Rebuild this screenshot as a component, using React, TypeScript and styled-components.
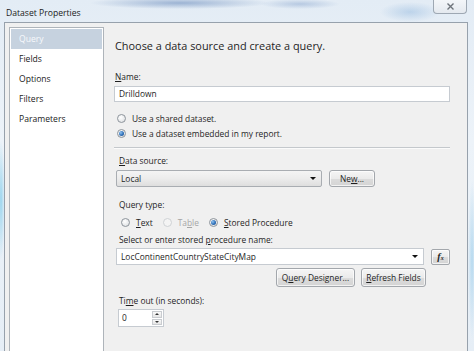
import React from "react";
import styled, { createGlobalStyle, css } from "styled-components";

const GlobalStyle = createGlobalStyle`
  html, body { margin: 0; padding: 0; }
  body {
    width: 474px;
    height: 351px;
    overflow: hidden;
    font-family: "Open Sans", "Noto Sans", "DejaVu Sans", sans-serif;
    color: #1e1e1e;
  }
`;

const Window = styled.div`
  width: 474px;
  height: 351px;
  display: flex;
  flex-direction: column;
  overflow: hidden;
  background:
    radial-gradient(ellipse 90px 6px at 180px 3px, rgba(70, 110, 170, 0.45), transparent),
    radial-gradient(ellipse 40px 5px at 300px 4px, rgba(80, 120, 180, 0.3), transparent),
    radial-gradient(ellipse 30px 10px at 410px 12px, rgba(140, 180, 220, 0.45), transparent),
    radial-gradient(ellipse 4px 60px at 1px 200px, rgba(90, 190, 230, 0.55), transparent),
    radial-gradient(ellipse 4px 80px at 472px 260px, rgba(120, 190, 230, 0.45), transparent),
    linear-gradient(180deg, #e3ecf5 0%, #edf3f9 40%, #e6eef6 100%);
`;

const TitleBar = styled.div`
  height: 22px;
  flex: none;
  display: flex;
  align-items: flex-start;
  padding-left: 6px;
`;

const Title = styled.span`
  margin-top: 7px;
  font-size: 8.6px;
  line-height: 12px;
  color: #1a1a1a;
`;

const CloseButton = styled.div`
  margin-left: auto;
  margin-right: 7px;
  width: 34px;
  height: 14px;
  box-sizing: border-box;
  border: 1px solid #9ea8b3;
  border-top: none;
  border-radius: 0 0 4px 4px;
  background: linear-gradient(180deg, #f3f6f9 0%, #e4e9ef 100%);
  display: flex;
  align-items: center;
  justify-content: center;
`;

const Client = styled.div`
  flex: 1;
  display: flex;
  margin: 0 6px 0 4px;
  border: 1px solid #97a1ac;
  border-bottom: none;
  background: #f0f0f0;
`;

const Nav = styled.div`
  width: 96px;
  box-sizing: border-box;
  margin: 4px 0 0 4px;
  padding: 1px;
  background: #ffffff;
  border: 1px solid #aeb4ba;
  border-bottom: none;
  display: flex;
  flex-direction: column;
`;

const NavItem = styled.div<{ $selected?: boolean }>`
  height: 20px;
  box-sizing: border-box;
  padding: 1px 0 0 8px;
  line-height: 19px;
  font-size: 8.6px;
  color: #222;
  ${(p) =>
    p.$selected &&
    css`
      background: #c6d2df;
      color: #f7f9fc;
    `}
`;

const Content = styled.div`
  flex: 1;
  display: flex;
  flex-direction: column;
  padding: 0 17px 0 10px;
`;

const Heading = styled.div`
  margin-top: 15px;
  padding-left: 1px;
  height: 16px;
  line-height: 16px;
  font-size: 10.9px;
  color: #1e1e1e;
`;

const Label = styled.div<{ $mt: number; $indent?: number }>`
  margin-top: ${(p) => p.$mt}px;
  padding-left: ${(p) => p.$indent ?? 1}px;
  height: 12px;
  line-height: 12px;
  font-size: 8.4px;
  color: #1e1e1e;
`;

const U = styled.span`
  text-decoration: underline;
  text-underline-offset: 1px;
`;

const TextBox = styled.div`
  margin-top: 3px;
  height: 16px;
  box-sizing: border-box;
  border: 1px solid #c6cbd1;
  background: #fff;
  padding-left: 4px;
  font-size: 8.4px;
  line-height: 14px;
`;

const RadioRow = styled.div<{ $mt: number; $indent: number; $gap?: number }>`
  margin-top: ${(p) => p.$mt}px;
  padding-left: ${(p) => p.$indent}px;
  height: 14px;
  display: flex;
  align-items: center;
  gap: ${(p) => p.$gap ?? 0}px;
`;

const RadioOption = styled.label<{ $disabled?: boolean }>`
  display: flex;
  align-items: center;
  gap: 6px;
  font-size: 8.4px;
  color: ${(p) => (p.$disabled ? "#a6a6a6" : "#1e1e1e")};
`;

const RadioCircle = styled.span<{ $checked?: boolean; $disabled?: boolean }>`
  width: 9px;
  height: 9px;
  box-sizing: border-box;
  border-radius: 50%;
  border: 1px solid ${(p) => (p.$disabled ? "#cfd2d5" : "#8e959c")};
  background: ${(p) =>
    p.$disabled
      ? "#f4f4f4"
      : "radial-gradient(circle at 40% 35%, #ffffff 0%, #e4e6e8 70%, #d0d3d6 100%)"};
  display: flex;
  align-items: center;
  justify-content: center;
  &::after {
    content: "";
    display: ${(p) => (p.$checked ? "block" : "none")};
    width: 5px;
    height: 5px;
    border-radius: 50%;
    background: radial-gradient(circle at 35% 35%, #8fc2f0 0%, #2e6fb8 55%, #1c4a85 100%);
  }
`;

const Separator = styled.div`
  margin-top: 7px;
  height: 1px;
  background: #c4c8cc;
  border-bottom: 1px solid #fbfbfb;
`;

const Section = styled.div`
  display: flex;
  flex-direction: column;
  padding-left: 2px;
`;

const ControlRow = styled.div<{ $mt: number }>`
  margin-top: ${(p) => p.$mt}px;
  display: flex;
  align-items: center;
  gap: 7px;
`;

const Combo = styled.div<{ $width: number; $editable?: boolean }>`
  width: ${(p) => p.$width}px;
  height: 17px;
  box-sizing: border-box;
  display: flex;
  align-items: center;
  padding: 0 4px 0 4px;
  font-size: 8.4px;
  border: 1px solid ${(p) => (p.$editable ? "#c6cbd1" : "#a9adb2")};
  border-radius: ${(p) => (p.$editable ? 0 : 2)}px;
  background: ${(p) =>
    p.$editable ? "#ffffff" : "linear-gradient(180deg, #f4f4f4 0%, #ececec 50%, #dedede 100%)"};
`;

const ComboText = styled.span`
  flex: 1;
`;

const Arrow = styled.span`
  width: 0;
  height: 0;
  border-left: 3px solid transparent;
  border-right: 3px solid transparent;
  border-top: 3px solid #111;
  margin-right: 1px;
`;

const Button = styled.div<{ $width: number; $height?: number }>`
  width: ${(p) => p.$width}px;
  height: ${(p) => p.$height ?? 18}px;
  box-sizing: border-box;
  display: flex;
  align-items: center;
  justify-content: center;
  font-size: 8.4px;
  color: #1e1e1e;
  border: 1px solid #a3a7ac;
  border-radius: 3px;
  background: linear-gradient(180deg, #f5f5f5 0%, #ebebeb 50%, #dcdcdc 51%, #d4d4d4 100%);
  box-shadow: inset 0 0 0 1px rgba(255, 255, 255, 0.7);
`;

const FxButton = styled(Button)`
  border-radius: 2px;
  font-family: "Liberation Serif", serif;
  font-style: italic;
  font-weight: bold;
  font-size: 10px;
`;

const Sub = styled.span`
  font-size: 6px;
  margin-top: 3px;
`;

const ButtonRow = styled.div`
  margin-top: 3px;
  display: flex;
  justify-content: flex-end;
  gap: 6px;
  padding-right: 24px;
`;

const Spinner = styled.div`
  margin-top: 2px;
  margin-left: 2px;
  width: 46px;
  height: 18px;
  box-sizing: border-box;
  border: 1px solid #c6cbd1;
  background: #fff;
  display: flex;
  align-items: stretch;
`;

const SpinnerValue = styled.div`
  flex: 1;
  padding-left: 3px;
  font-size: 8.4px;
  line-height: 16px;
`;

const SpinButtons = styled.div`
  width: 10px;
  display: flex;
  flex-direction: column;
  padding: 1px 1px 1px 0;
  gap: 1px;
`;

const SpinButton = styled.div<{ $up?: boolean }>`
  flex: 1;
  border: 1px solid #c9ccd0;
  background: linear-gradient(180deg, #f8f8f8, #e6e6e6);
  display: flex;
  align-items: center;
  justify-content: center;
  &::after {
    content: "";
    border-left: 2px solid transparent;
    border-right: 2px solid transparent;
    ${(p) =>
      p.$up ? "border-bottom: 2px solid #333;" : "border-top: 2px solid #333;"}
  }
`;

export default function App() {
  return (
    <>
      <GlobalStyle />
      <Window>
        <TitleBar>
          <Title>Dataset Properties</Title>
          <CloseButton>
            <svg width="7" height="7" viewBox="0 0 7 7">
              <path d="M0.5 0.5 L6.5 6.5 M6.5 0.5 L0.5 6.5" stroke="#6d737a" strokeWidth="1.4" />
            </svg>
          </CloseButton>
        </TitleBar>
        <Client>
          <Nav>
            <NavItem $selected>Query</NavItem>
            <NavItem>Fields</NavItem>
            <NavItem>Options</NavItem>
            <NavItem>Filters</NavItem>
            <NavItem>Parameters</NavItem>
          </Nav>
          <Content>
            <Heading>Choose a data source and create a query.</Heading>
            <Label $mt={17}>
              <U>N</U>ame:
            </Label>
            <TextBox>Drilldown</TextBox>
            <RadioRow $mt={9} $indent={3}>
              <RadioOption>
                <RadioCircle />
                Use a shared dataset.
              </RadioOption>
            </RadioRow>
            <RadioRow $mt={1} $indent={3}>
              <RadioOption>
                <RadioCircle $checked />
                Use a dataset embedded in my report.
              </RadioOption>
            </RadioRow>
            <Separator />
            <Section>
              <Label $mt={6} $indent={3}>
                <U>D</U>ata source:
              </Label>
              <ControlRow $mt={3}>
                <Combo $width={206}>
                  <ComboText>Local</ComboText>
                  <Arrow />
                </Combo>
                <Button $width={46} $height={17}>
                  Ne<U>w</U>...
                </Button>
              </ControlRow>
              <Label $mt={12} $indent={3}>
                Query type:
              </Label>
              <RadioRow $mt={4} $indent={5} $gap={10}>
                <RadioOption>
                  <RadioCircle />
                  <span>
                    <U>T</U>ext
                  </span>
                </RadioOption>
                <RadioOption $disabled>
                  <RadioCircle $disabled />
                  <span>
                    Ta<U>b</U>le
                  </span>
                </RadioOption>
                <RadioOption>
                  <RadioCircle $checked />
                  <span>
                    <U>S</U>tored Procedure
                  </span>
                </RadioOption>
              </RadioRow>
              <Label $mt={5} $indent={3}>
                Select or enter stored <U>p</U>rocedure name:
              </Label>
              <ControlRow $mt={2}>
                <Combo $width={308} $editable>
                  <ComboText>LocContinentCountryStateCityMap</ComboText>
                  <Arrow />
                </Combo>
                <FxButton $width={19} $height={16}>
                  f<Sub>x</Sub>
                </FxButton>
              </ControlRow>
              <ButtonRow>
                <Button $width={79} $height={19}>
                  Q<U>u</U>ery Designer...
                </Button>
                <Button $width={65} $height={19}>
                  <U>R</U>efresh Fields
                </Button>
              </ButtonRow>
              <Label $mt={8} $indent={3}>
                Ti<U>m</U>e out (in seconds):
              </Label>
              <Spinner>
                <SpinnerValue>0</SpinnerValue>
                <SpinButtons>
                  <SpinButton $up />
                  <SpinButton />
                </SpinButtons>
              </Spinner>
            </Section>
          </Content>
        </Client>
      </Window>
    </>
  );
}
